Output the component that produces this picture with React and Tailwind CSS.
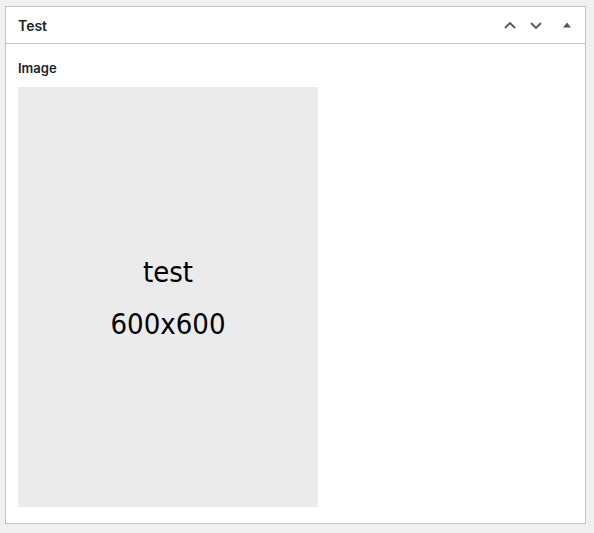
import React from 'react';

const ChevronUp = () => (
    <svg width="14" height="14" viewBox="0 0 14 14" fill="none" stroke="#50575e" strokeWidth="1.8">
        <path d="M2 10 L7 5 L12 10" />
    </svg>
);

const ChevronDown = () => (
    <svg width="14" height="14" viewBox="0 0 14 14" fill="none" stroke="#50575e" strokeWidth="1.8">
        <path d="M2 5 L7 10 L12 5" />
    </svg>
);

const Triangle = () => (
    <svg width="10" height="10" viewBox="0 0 10 10" fill="#50575e">
        <path d="M1 7.5 L5 2.5 L9 7.5 Z" />
    </svg>
);

export default function App() {
    return (
        <div className="w-[594px] h-[533px] bg-[#f0f0f1] pl-[5px] pt-[6px] pr-[8px]" style={{ fontFamily: 'Inter, "Liberation Sans", sans-serif' }}>
            <div className="bg-white border border-[#c3c4c7]">
                <div className="h-[37px] flex items-center justify-between border-b border-[#c3c4c7] pl-3">
                    <span className="text-[14px] font-semibold text-[#1d2327]">Test</span>
                    <div className="flex items-center">
                        <span className="w-[26px] flex justify-center"><ChevronUp /></span>
                        <span className="w-[26px] flex justify-center"><ChevronDown /></span>
                        <span className="w-[36px] flex justify-center"><Triangle /></span>
                    </div>
                </div>
                <div className="pl-3 pt-[16px] pb-[16px]">
                    <div className="text-[13px] font-semibold text-[#1d2327] leading-4 mb-[11px]">Image</div>
                    <div className="w-[300px] h-[420px] bg-[#ebebeb] flex flex-col items-center justify-center text-black" style={{ fontFamily: '"DejaVu Sans Condensed", "DejaVu Sans", sans-serif' }}>
                        <div className="text-[29px] leading-[52px] mt-[1px]">test</div>
                        <div className="text-[29px] leading-[52px]">600x600</div>
                    </div>
                </div>
            </div>
        </div>
    );
}
